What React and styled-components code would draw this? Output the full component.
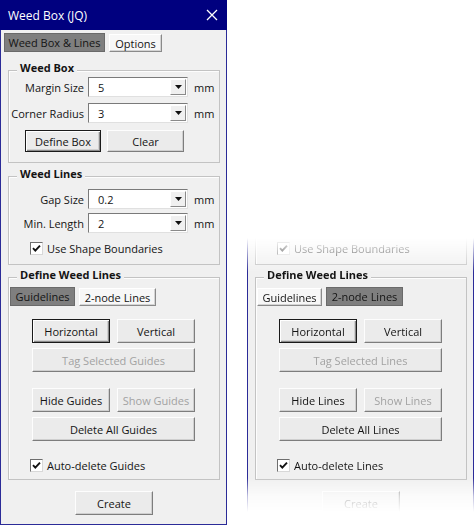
import React from 'react';
import styled, { createGlobalStyle, css } from 'styled-components';

const GlobalStyle = createGlobalStyle`
  html, body { margin:0; padding:0; background:#fff; }
  body {
    font-family: "Open Sans", "Noto Sans", sans-serif;
    font-size: 11px;
    color: #141414;
  }
  * { box-sizing: border-box; }
`;

const Stage = styled.div`
  display: flex;
  gap: 20px;
  width: 474px;
  height: 526px;
`;

const Window = styled.div`
  width: 227px;
  height: 525px;
  background: #f0f0f0;
  border: 1px solid #2b2b98;
  border-top: none;
  display: flex;
  flex-direction: column;
  ${p => p.$faded && css`
    -webkit-mask-image: linear-gradient(to bottom, transparent 238px, rgba(0,0,0,.35) 250px, #000 272px, #000 478px, rgba(0,0,0,.3) 496px, transparent 512px);
    mask-image: linear-gradient(to bottom, transparent 238px, rgba(0,0,0,.35) 250px, #000 272px, #000 478px, rgba(0,0,0,.3) 496px, transparent 512px);
  `}
`;

const TitleBar = styled.div`
  height: 30px;
  margin: 0 -1px;
  background: #00007f;
  color: #fff;
  display: flex;
  align-items: center;
  justify-content: space-between;
  padding: 0 9px 0 8px;
  font-size: 12px;
`;

const TabRow = styled.div`
  display: flex;
  align-items: flex-end;
  gap: ${p => p.$gap || 4}px;
  height: 19px;
  margin: ${p => p.$top}px 0 0 ${p => p.$left}px;
`;

const Tab = styled.div`
  width: ${p => p.$w}px;
  height: ${p => (p.$active ? 19 : 18)}px;
  display: flex;
  align-items: center;
  justify-content: center;
  ${p => p.$active ? css`
    background: #7f7f7f;
    border: 1px solid #6a6a6a;
    color: #141414;
  ` : css`
    background: #f7f7f7;
    border: 1px solid;
    border-color: #fff #8a8a8a #8a8a8a #fff;
    box-shadow: inset -1px -1px #d4d4d4;
  `}
`;

const Group = styled.div`
  width: 212px;
  margin: ${p => p.$top}px 0 0 7px;
  padding-bottom: ${p => p.$bottom}px;
  border: 1px solid #c3c3c3;
  box-shadow: inset 1px 1px #fdfdfd;
  display: flex;
  flex-direction: column;
`;

const GroupTitle = styled.div`
  align-self: flex-start;
  margin: -10px 0 0 8px;
  padding: 0 3px;
  line-height: 14px;
  background: #f0f0f0;
  font-weight: 700;
`;

const FieldRow = styled.div`
  display: flex;
  align-items: center;
  height: 20px;
  margin-top: ${p => p.$top}px;
`;

const Label = styled.div`
  width: 75px;
  text-align: right;
  white-space: nowrap;
`;

const Combo = styled.div`
  width: 100px;
  height: 20px;
  margin-left: 4px;
  background: #fff;
  border: 1px solid;
  border-color: #7a7a7a #e0e0e0 #e0e0e0 #7a7a7a;
  display: flex;
  align-items: center;
  padding: 1px 1px 1px 9px;
`;

const ComboValue = styled.span`
  flex: 1;
`;

const ComboButton = styled.div`
  width: 16px;
  height: 100%;
  background: #f0f0f0;
  border: 1px solid;
  border-color: #fff #8a8a8a #8a8a8a #fff;
  display: flex;
  align-items: center;
  justify-content: center;
`;

const Unit = styled.span`
  margin-left: 6px;
`;

const ButtonRow = styled.div`
  display: flex;
  gap: ${p => p.$gap}px;
  margin: ${p => p.$top}px 0 0 ${p => p.$left}px;
`;

const Button = styled.div`
  width: ${p => p.$w}px;
  height: ${p => p.$h || 24}px;
  display: flex;
  align-items: center;
  justify-content: center;
  background: #ebebeb;
  white-space: nowrap;
  color: ${p => (p.$disabled ? '#a2a2a2' : '#141414')};
  border: 1px solid;
  border-color: #fdfdfd #7d7d7d #7d7d7d #fdfdfd;
  box-shadow: inset -1px -1px #cfcfcf;
  ${p => p.$default && css`
    border-color: #1a1a1a;
    box-shadow: inset 1px 1px #fff, inset -1px -1px #8a8a8a, inset -2px -2px #d0d0d0;
  `}
`;

const CheckRow = styled.label`
  display: flex;
  align-items: center;
  height: 14px;
  margin: ${p => p.$top}px 0 0 21px;
`;

const CheckBox = styled.span`
  width: 13px;
  height: 13px;
  background: #fff;
  border: 1px solid;
  border-color: #6e6e6e #d8d8d8 #d8d8d8 #6e6e6e;
  display: flex;
  align-items: center;
  justify-content: center;
  margin-right: 4px;
`;

const CreateButton = styled(Button)`
  margin: 11px 0 0 74px;
`;

const Arrow = () => (
  <svg width="7" height="4" viewBox="0 0 7 4"><path d="M0 0h7L3.5 4z" fill="#111" /></svg>
);

const Tick = () => (
  <svg width="9" height="9" viewBox="0 0 9 9"><path d="M1 4.2l2.3 2.4L8 1.6" stroke="#111" strokeWidth="1.9" fill="none" /></svg>
);

const CloseIcon = () => (
  <svg width="12" height="12" viewBox="0 0 12 12"><path d="M1 1l10 10M11 1L1 11" stroke="#fff" strokeWidth="1.3" /></svg>
);

function Field({ label, value, top }) {
  return (
    <FieldRow $top={top}>
      <Label>{label}</Label>
      <Combo>
        <ComboValue>{value}</ComboValue>
        <ComboButton><Arrow /></ComboButton>
      </Combo>
      <Unit>mm</Unit>
    </FieldRow>
  );
}

function Check({ label, top }) {
  return (
    <CheckRow $top={top}>
      <CheckBox><Tick /></CheckBox>
      {label}
    </CheckRow>
  );
}

function WeedBoxWindow({ mode, faded }) {
  const noun = mode === 'lines' ? 'Lines' : 'Guides';
  return (
    <Window $faded={faded}>
      <TitleBar>
        <span>Weed Box (JQ)</span>
        <CloseIcon />
      </TitleBar>

      <TabRow $top={3} $left={3}>
        <Tab $w={101} $active>Weed Box &amp; Lines</Tab>
        <Tab $w={53}>Options</Tab>
      </TabRow>

      <Group $top={18} $bottom={10}>
        <GroupTitle>Weed Box</GroupTitle>
        <Field label="Margin Size" value="5" top={2} />
        <Field label="Corner Radius" value="3" top={6} />
        <ButtonRow $top={7} $left={16} $gap={6}>
          <Button $w={76} $h={22} $default>Define Box</Button>
          <Button $w={77} $h={22}>Clear</Button>
        </ButtonRow>
      </Group>

      <Group $top={13} $bottom={9}>
        <GroupTitle>Weed Lines</GroupTitle>
        <Field label="Gap Size" value="0.2" top={8} />
        <Field label="Min. Length" value="2" top={4} />
        <Check label="Use Shape Boundaries" top={8} />
      </Group>

      <Group $top={12} $bottom={7}>
        <GroupTitle>Define Weed Lines</GroupTitle>
        <TabRow $top={5} $left={1}>
          <Tab $w={65} $active={mode === 'guides'}>Guidelines</Tab>
          <Tab $w={77} $active={mode === 'lines'}>2-node Lines</Tab>
        </TabRow>
        <ButtonRow $top={13} $left={23} $gap={7}>
          <Button $w={78} $default>Horizontal</Button>
          <Button $w={78}>Vertical</Button>
        </ButtonRow>
        <ButtonRow $top={5} $left={23} $gap={7}>
          <Button $w={163} $disabled>Tag Selected {noun}</Button>
        </ButtonRow>
        <ButtonRow $top={16} $left={23} $gap={7}>
          <Button $w={78}>Hide {noun}</Button>
          <Button $w={78} $disabled>Show {noun}</Button>
        </ButtonRow>
        <ButtonRow $top={5} $left={23} $gap={7}>
          <Button $w={163}>Delete All {noun}</Button>
        </ButtonRow>
        <Check label={`Auto-delete ${noun}`} top={17} />
      </Group>

      <CreateButton $w={78}>Create</CreateButton>
    </Window>
  );
}

export default function App() {
  return (
    <Stage>
      <GlobalStyle />
      <WeedBoxWindow mode="guides" />
      <WeedBoxWindow mode="lines" faded />
    </Stage>
  );
}
